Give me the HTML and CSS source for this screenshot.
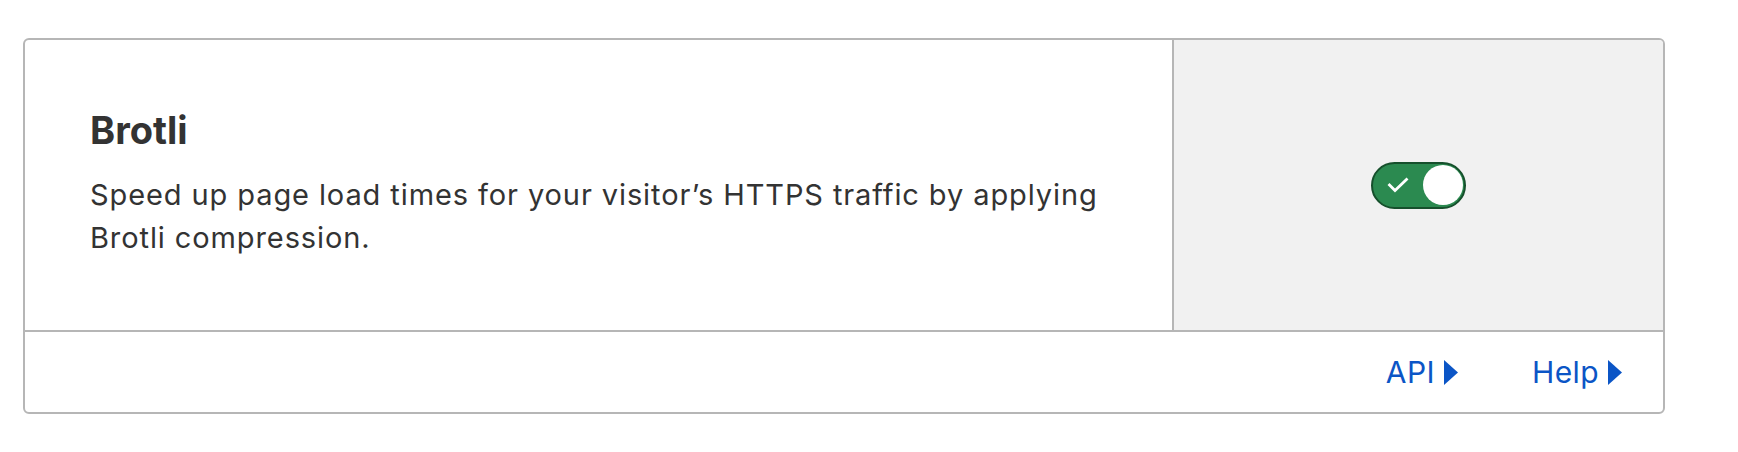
FILE: index.html
```html
<!DOCTYPE html>
<html lang="en">
<head>
<meta charset="utf-8">
<title>Brotli</title>
<link rel="stylesheet" href="styles.css">
</head>
<body>
<div class="page">
  <section class="card">
    <div class="card-main">
      <div class="card-body">
        <h3 class="card-title">Brotli</h3>
        <p class="card-desc">Speed up page load times for your visitor’s HTTPS traffic by applying Brotli compression.</p>
      </div>
      <div class="card-control">
        <button class="toggle" type="button" aria-pressed="true" aria-label="Brotli">
          <svg class="toggle-check" width="22" height="16" viewBox="0 0 22 16"><path d="M2.5 8 L8 13.5 L19.5 2.5" fill="none" stroke="#fff" stroke-width="2.8" stroke-linecap="square"/></svg>
          <span class="toggle-knob"></span>
        </button>
      </div>
    </div>
    <div class="card-footer">
      <a class="card-link" href="#">API<svg class="tri" width="14" height="25" viewBox="0 0 14 25"><polygon points="0,0 14,12.5 0,25" fill="currentColor"/></svg></a>
      <a class="card-link" href="#">Help<svg class="tri" width="14" height="25" viewBox="0 0 14 25"><polygon points="0,0 14,12.5 0,25" fill="currentColor"/></svg></a>
    </div>
  </section>
</div>
</body>
</html>
```
FILE: styles.css
```css
html, body {
  margin: 0;
  padding: 0;
  background: #fff;
}
body {
  font-family: Inter, "Noto Sans", sans-serif;
  color: #333333;
}
.page {
  padding: 38px 73px 0 23px;
}
.card {
  border: 2px solid #b6b6b6;
  border-radius: 6px;
  overflow: hidden;
}
.card-main {
  display: flex;
  height: 290px;
  border-bottom: 2px solid #b6b6b6;
}
.card-body {
  flex: 1;
  display: flex;
  flex-direction: column;
  justify-content: center;
  padding: 0 60px 5px 65px;
  border-right: 2px solid #b6b6b6;
}
.card-title {
  margin: 0 0 20px;
  font-size: 38px;
  line-height: 46px;
  font-weight: 700;
  color: #333;
}
.card-desc {
  margin: 0;
  font-size: 29px;
  line-height: 43px;
  letter-spacing: 0.9px;
  color: #333;
}
.card-control {
  width: 489px;
  flex: none;
  background: #f1f1f1;
  display: flex;
  align-items: center;
  justify-content: center;
}
.toggle {
  position: relative;
  width: 95px;
  height: 47px;
  border: 2.5px solid #16502c;
  border-radius: 24px;
  background: #2b8a50;
  cursor: pointer;
  display: flex;
  align-items: center;
  justify-content: space-between;
  padding: 0 1.5px 0 14px;
  box-sizing: border-box;
}
.toggle-check {
  display: block;
}
.toggle-knob {
  width: 40px;
  height: 40px;
  border-radius: 50%;
  background: #fff;
}
.card-footer {
  height: 80px;
  display: flex;
  align-items: center;
  justify-content: flex-end;
  gap: 74px;
  padding-right: 41px;
}
.card-link {
  display: inline-flex;
  align-items: center;
  gap: 9px;
  color: #0b55c6;
  text-decoration: none;
  font-size: 30px;
  line-height: 36px;
  letter-spacing: 0.4px;
}
.tri {
  display: block;
}
```
